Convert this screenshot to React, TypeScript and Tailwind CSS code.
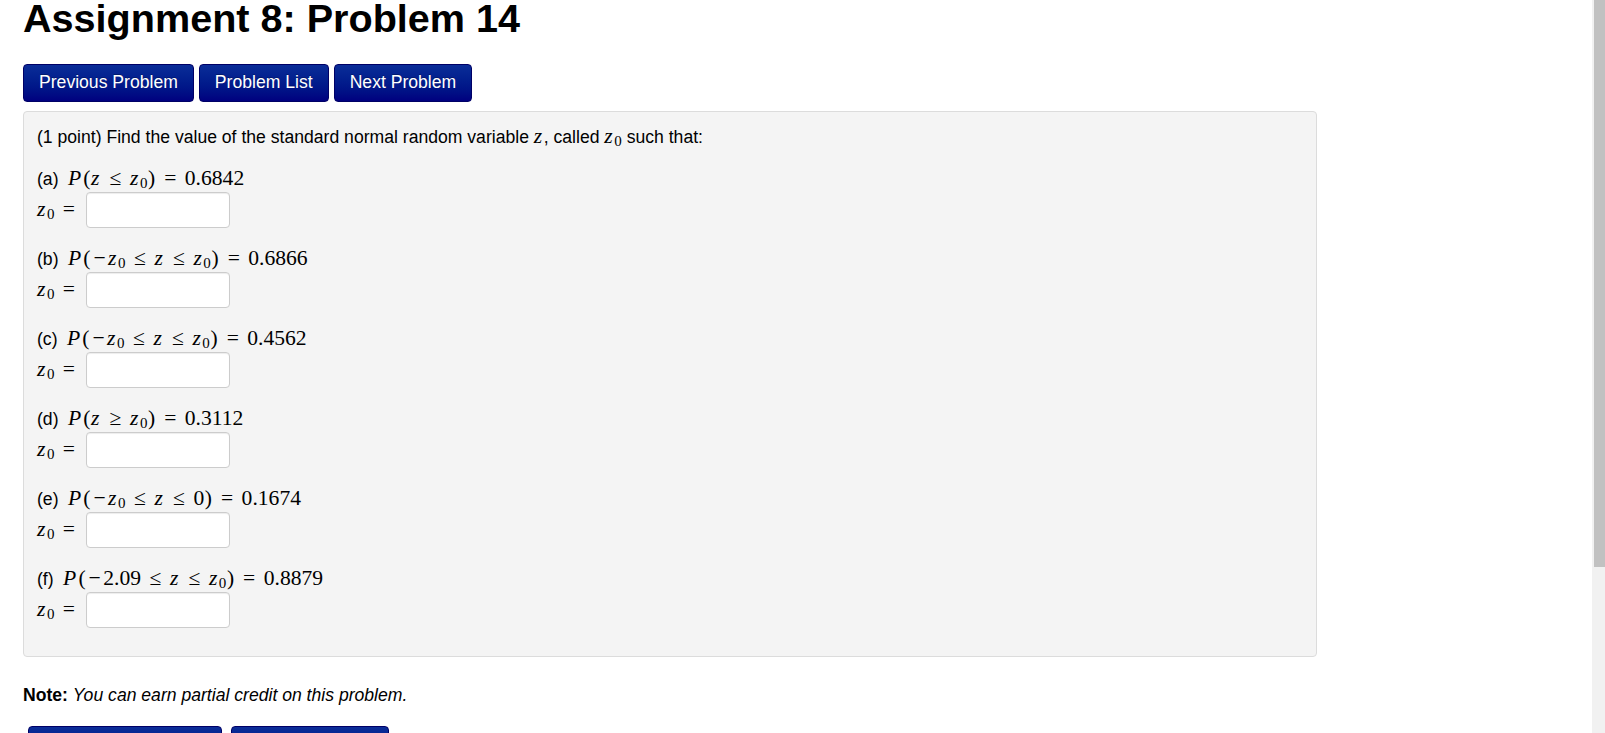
import type { ReactNode } from "react";

// math bits, set in a serif face sized like MathJax output
function M({ children }: { children: ReactNode }) {
  return (
    <span className="font-['Liberation_Serif','Times_New_Roman',serif] text-[21.6px] leading-none text-black">
      {children}
    </span>
  );
}

function V({ children }: { children: ReactNode }) {
  return <i className="inline-block pr-[1.5px] italic">{children}</i>;
}

function Sub() {
  return <span className="text-[15px] align-[-3px]">0</span>;
}

function Rel({ children }: { children: ReactNode }) {
  return <span className="mx-[6px] inline-block w-[17px] text-center">{children}</span>;
}

// parens and unary minus get TeX widths
function L() {
  return <span className="inline-block w-[8.4px] text-center">(</span>;
}
function R() {
  return <span className="inline-block w-[8.4px] text-center">)</span>;
}
function Neg() {
  return <span className="inline-block w-[17px] text-center">−</span>;
}

function Z0() {
  return (
    <>
      <V>z</V>
      <Sub />
    </>
  );
}

function NavButton({ children }: { children: ReactNode }) {
  return (
    <button className="h-[38px] rounded-[4px] border border-[#000066] bg-linear-to-b from-[#0b2d98] to-[#00007f] px-[15px] text-[17.6px] leading-none text-white [text-shadow:0_-1px_0_rgba(0,0,0,0.25)]">
      {children}
    </button>
  );
}

const parts: { tag: string; expr: ReactNode }[] = [
  {
    tag: "(a)",
    expr: (
      <>
        <V>P</V>
        <L />
        <V>z</V>
        <Rel>≤</Rel>
        <Z0 />
        <R />
        <Rel>=</Rel>0.6842
      </>
    ),
  },
  {
    tag: "(b)",
    expr: (
      <>
        <V>P</V>
        <L />
        <Neg />
        <Z0 />
        <Rel>≤</Rel>
        <V>z</V>
        <Rel>≤</Rel>
        <Z0 />
        <R />
        <Rel>=</Rel>0.6866
      </>
    ),
  },
  {
    tag: "(c)",
    expr: (
      <>
        <V>P</V>
        <L />
        <Neg />
        <Z0 />
        <Rel>≤</Rel>
        <V>z</V>
        <Rel>≤</Rel>
        <Z0 />
        <R />
        <Rel>=</Rel>0.4562
      </>
    ),
  },
  {
    tag: "(d)",
    expr: (
      <>
        <V>P</V>
        <L />
        <V>z</V>
        <Rel>≥</Rel>
        <Z0 />
        <R />
        <Rel>=</Rel>0.3112
      </>
    ),
  },
  {
    tag: "(e)",
    expr: (
      <>
        <V>P</V>
        <L />
        <Neg />
        <Z0 />
        <Rel>≤</Rel>
        <V>z</V>
        <Rel>≤</Rel>0<R />
        <Rel>=</Rel>0.1674
      </>
    ),
  },
  {
    tag: "(f)",
    expr: (
      <>
        <V>P</V>
        <L />
        <Neg />
        2.09<Rel>≤</Rel>
        <V>z</V>
        <Rel>≤</Rel>
        <Z0 />
        <R />
        <Rel>=</Rel>0.8879
      </>
    ),
  },
];

export default function App() {
  return (
    <div className="flex h-[733px] overflow-hidden bg-white font-['Liberation_Sans',Arial,sans-serif] text-black">
      <main className="min-w-0 flex-1 pl-[23px]">
        <h1 className="text-[39.6px] leading-[36px] font-bold">Assignment 8: Problem 14</h1>

        <nav className="mt-[28px] flex gap-[5px]">
          <NavButton>Previous Problem</NavButton>
          <NavButton>Problem List</NavButton>
          <NavButton>Next Problem</NavButton>
        </nav>

        <section className="mt-[9px] w-[1294px] rounded-[4px] border border-[#dcdcdc] bg-[#f4f4f4] px-[13px] pt-[13px] pb-[28px] text-[17.6px]">
          <p className="leading-[24px]">
            (1 point) Find the value of the standard normal random variable{" "}
            <M>
              <V>z</V>
            </M>
            , called{" "}
            <M>
              <Z0 />
            </M>{" "}
            such that:
          </p>

          <div className="mt-[17px] flex flex-col gap-[18px]">
            {parts.map((p) => (
              <div key={p.tag}>
                <div className="flex h-[26px] items-baseline">
                  <span className="leading-none">{p.tag}</span>
                  <span className="ml-[9.5px]">
                    <M>{p.expr}</M>
                  </span>
                </div>
                <div className="flex h-[36px] items-center">
                  <M>
                    <Z0 />
                    <span className="ml-[6px] inline-block w-[17px] text-center">=</span>
                  </M>
                  <input
                    type="text"
                    className="ml-[9px] h-[36px] w-[144px] rounded-[4px] border border-[#cccccc] bg-white shadow-[inset_0_1px_1px_rgba(0,0,0,0.075)]"
                  />
                </div>
              </div>
            ))}
          </div>
        </section>

        <p className="mt-[26px] text-[17.6px] leading-[24px]">
          <b>Note:</b> <i>You can earn partial credit on this problem.</i>
        </p>

        <div className="mt-[19px] ml-[5px] flex gap-[9px]">
          <NavButton>Preview My Answers</NavButton>
          <NavButton>Submit Answers</NavButton>
        </div>
      </main>

      <div className="w-[13px] shrink-0 bg-[#f1f1f1] pl-[2px]">
        <div className="h-[567px] bg-[#c1c1c1]" />
      </div>
    </div>
  );
}
